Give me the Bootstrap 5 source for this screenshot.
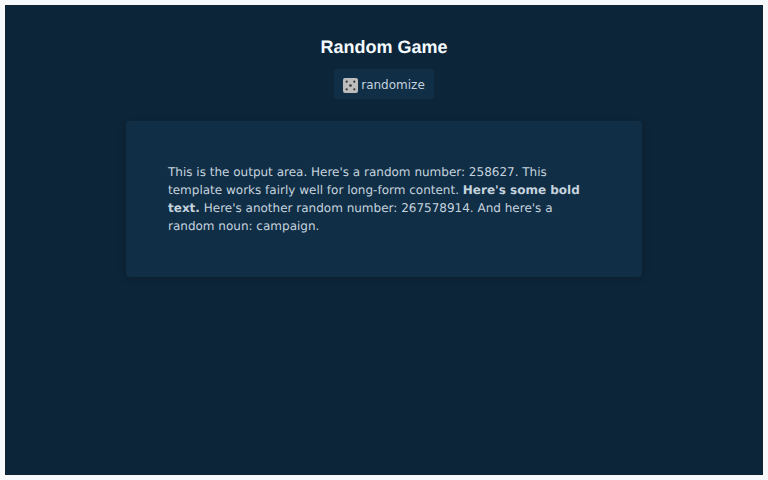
<!DOCTYPE html>
<html lang="en">
<head>
<meta charset="utf-8">
<meta name="viewport" content="width=device-width, initial-scale=1">
<title>Random Game</title>
<link href="https://cdn.jsdelivr.net/npm/bootstrap@5.3.0/dist/css/bootstrap.min.css" rel="stylesheet">
<style>
  body {
    background: #f8f9fa;
    color: #c5d3de;
    font: 12px/18px "DejaVu Sans", sans-serif;
    text-rendering: geometricPrecision;
    padding: 5px;
  }
  .stage { background: #0d2538; padding: 32px 16px; }
  .title {
    color: #f5fbff;
    font: bold 18px/20px "Liberation Sans", Arial, sans-serif;
    margin-bottom: 12px;
  }
  .btn-roll {
    --bs-btn-color: #c5d3de;
    --bs-btn-bg: #102e46;
    --bs-btn-border-color: #102e46;
    --bs-btn-hover-color: #fff;
    --bs-btn-hover-bg: #173a57;
    --bs-btn-padding-x: 8px;
    --bs-btn-font-size: 12px;
    --bs-btn-line-height: 18px;
    --bs-btn-border-radius: 2px;
    gap: 3px;
    padding-top: 6px;
    padding-bottom: 4px;
    margin-bottom: 22px;
  }
  .output {
    --bs-card-bg: #102e46;
    --bs-card-color: #c5d3de;
    --bs-card-border-radius: 4px;
    --bs-card-spacer-x: 42px;
    --bs-card-spacer-y: 42px;
    max-width: 516px;
    box-shadow: 0 2px 8px rgba(0, 0, 0, .15);
  }
</style>
</head>
<body class="min-vh-100 d-flex flex-column">
<main class="stage flex-grow-1 d-flex flex-column align-items-center">
  <h1 class="title text-center">Random Game</h1>
  <button type="button" class="btn btn-roll d-inline-flex align-items-center">
    <svg width="15" height="15" viewBox="0 0 15 15" aria-hidden="true">
      <rect width="15" height="15" rx="2" fill="#bcbcbc"/>
      <g fill="#333"><circle cx="3.7" cy="3.7" r="1.1"/><circle cx="11.3" cy="3.7" r="1.1"/><circle cx="7.5" cy="7.5" r="1.3"/><circle cx="3.7" cy="11.3" r="1.1"/><circle cx="11.3" cy="11.3" r="1.1"/></g>
    </svg>
    <span>randomize</span>
  </button>
  <section class="card output border-0 w-100">
    <div class="card-body">
      <p class="mb-0">This is the output area. Here's a random number: 258627. This template works fairly well for long-form content. <b>Here's some bold text.</b> Here's another random number: 267578914. And here's a random noun: campaign.</p>
    </div>
  </section>
</main>
<script src="https://cdn.jsdelivr.net/npm/bootstrap@5.3.0/dist/js/bootstrap.bundle.min.js"></script>
</body>
</html>
